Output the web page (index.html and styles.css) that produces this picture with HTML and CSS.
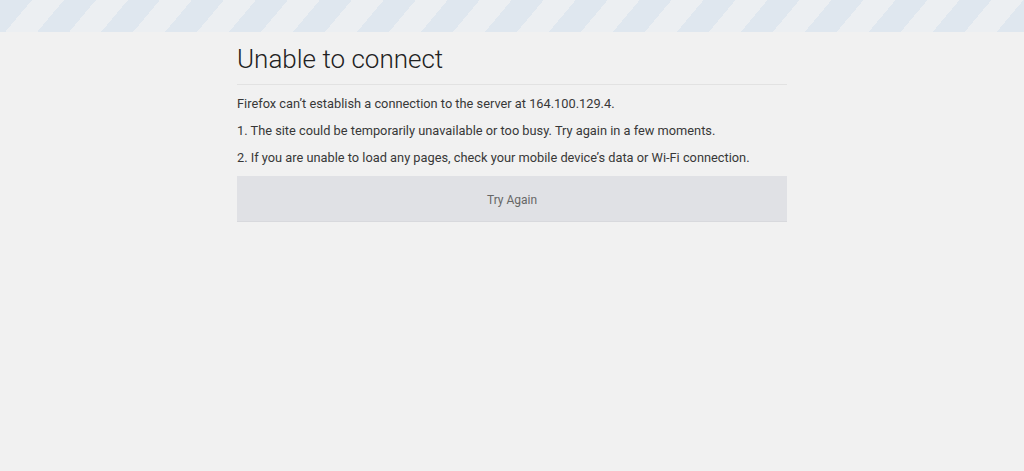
FILE: index.html
```html
<!DOCTYPE html>
<html lang="en">
<head>
    <meta charset="UTF-8">
    <meta name="viewport" content="width=device-width, initial-scale=1.0">
    <title>Problem loading page</title>
    <link rel="stylesheet" href="styles.css">
</head>
<body>
    <div class="stripe"></div>

    <div class="error-container">
        <div class="title">
            <h1>Unable to connect</h1>
        </div>
        <div class="error-desc">
            <p>Firefox can’t establish a connection to the server at 164.100.129.4.</p>
            <ul>
                <li>1. The site could be temporarily unavailable or too busy. Try again in a few moments.</li>
                <li>2. If you are unable to load any pages, check your mobile device’s data or Wi-Fi connection.</li>
            </ul>
        </div>
        <button class="try-again">Try Again</button>
    </div>
</body>
</html>
```

FILE: styles.css
```css
body {
    font-family: Roboto, "Noto Sans", sans-serif;
    background-color: #f1f1f1;
    color: #222;
    margin: 0;
    padding: 0;
}
.stripe {
    height: 32px;
    background: repeating-linear-gradient(130deg, #dfe7ef 0, #dfe7ef 24.5px, #eceff2 24.5px, #eceff2 49px);
}
.error-container {
    max-width: 550px;
    margin: 0 auto;
    padding-top: 10px;
}
.title {
    border-bottom: 1px solid #e2e2e2;
    padding-bottom: 8px;
}
.title h1 {
    margin: 0;
    font-size: 26px;
    font-weight: 300;
    line-height: 34px;
    color: #222;
}
.error-desc {
    font-size: 12.8px;
    color: #383838;
    padding-top: 8px;
}
.error-desc p {
    margin: 0;
    line-height: 21px;
}
.error-desc ul {
    list-style: none;
    margin: 0;
    padding: 0;
}
.error-desc li {
    margin-top: 6px;
    line-height: 21px;
}
.try-again {
    display: block;
    width: 100%;
    height: 46px;
    margin-top: 8px;
    padding-top: 4px;
    background-color: #e0e1e5;
    border: none;
    border-bottom: 1px solid #d8d9dd;
    font-family: Roboto, "Noto Sans", sans-serif;
    font-size: 12px;
    color: #666;
}
```
